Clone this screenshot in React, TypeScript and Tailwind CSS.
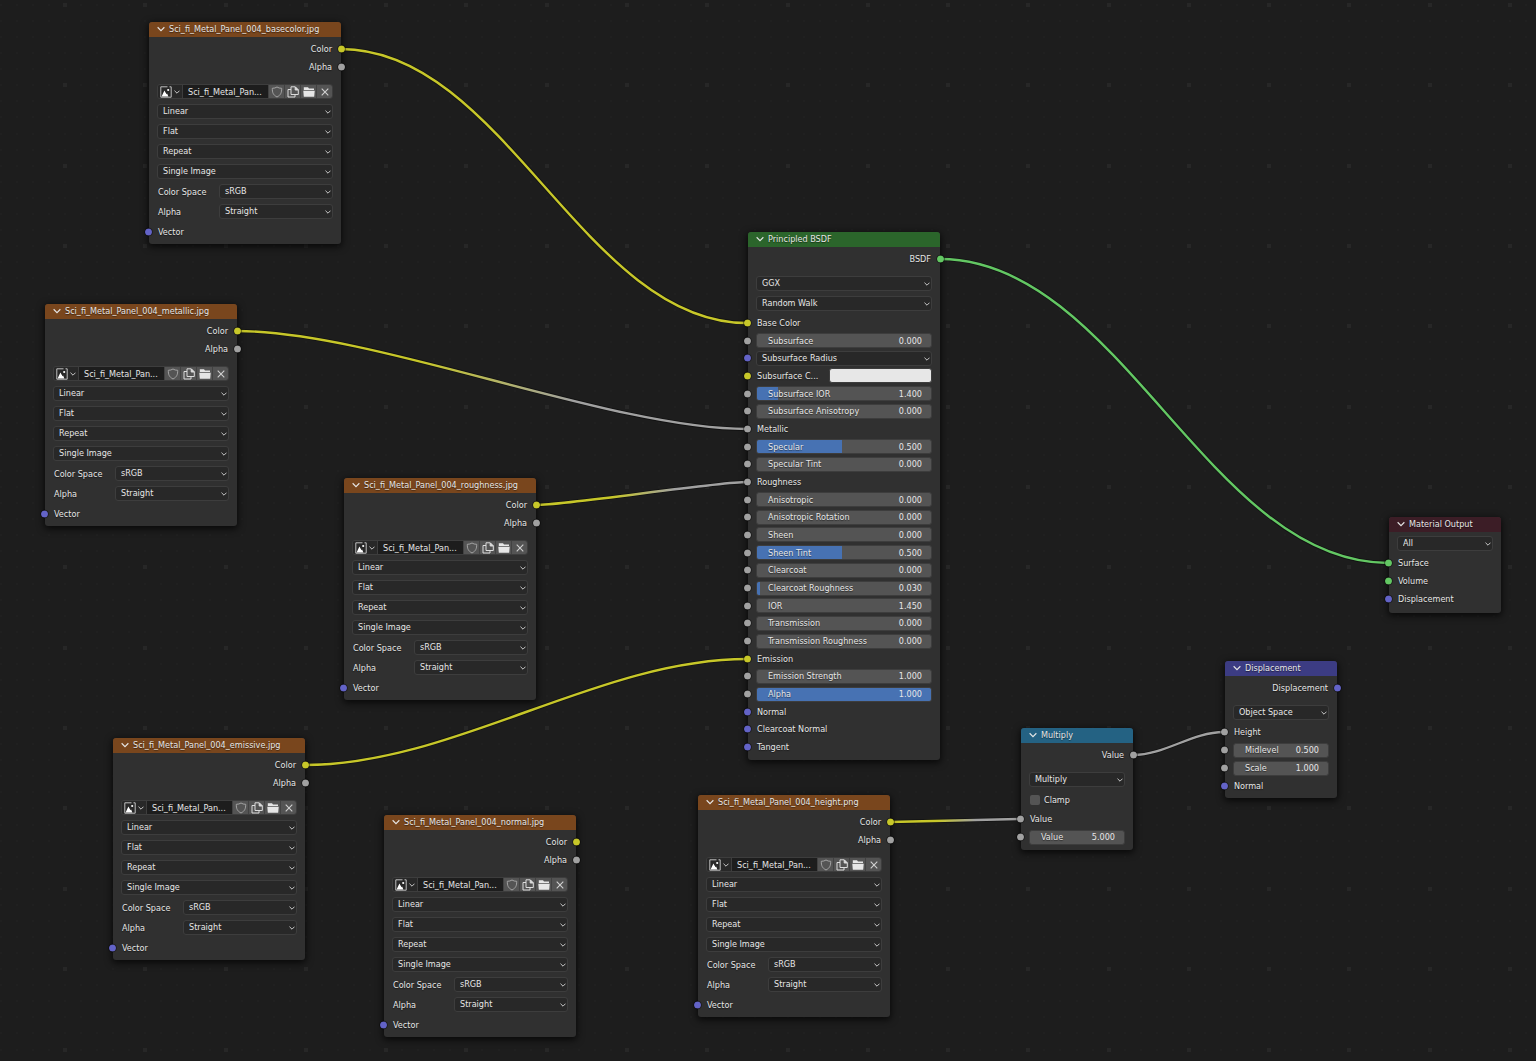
import { useId } from "react";

type Kind = "color" | "value" | "vector" | "shader";

const socketFill: Record<Kind, string> = {
  color: "bg-[#c7c729]",
  value: "bg-[#a1a1a1]",
  vector: "bg-[#6363c7]",
  shader: "bg-[#63c763]",
};

function Socket({ kind, side }: { kind: Kind; side: "left" | "right" }) {
  return (
    <span
      className={`absolute top-1/2 size-[7px] -translate-y-1/2 rounded-full outline outline-black/40 ${side === "left" ? "-left-1" : "-right-1"} ${socketFill[kind]}`}
    />
  );
}

function Chevron({ className }: { className: string }) {
  return (
    <svg viewBox="0 0 10 10" className={className} fill="none" stroke="currentColor" strokeWidth="1.4" aria-hidden="true">
      <path d="M0.800 2.800L5 7l4.200-4.200" />
    </svg>
  );
}

function Output({ label, kind }: { label: string; kind: Kind }) {
  return (
    <div className="relative flex h-[18px] items-center justify-end px-[9px]">
      {label}
      <Socket kind={kind} side="right" />
    </div>
  );
}

function Input({ label, kind }: { label: string; kind: Kind }) {
  return (
    <div className="relative flex h-full min-h-4 items-center px-[9px]">
      {label}
      <Socket kind={kind} side="left" />
    </div>
  );
}

function Select({ value, label }: { value: string; label: string }) {
  return (
    <div className="relative min-w-0 flex-1">
      <select
        aria-label={label}
        className="block h-[15px] w-full appearance-none rounded-[3px] border border-[#3d3d3d] bg-[#282828] pr-3 pl-[5px] leading-[13px] outline-none"
      >
        <option>{value}</option>
      </select>
      <Chevron className="pointer-events-none absolute top-[5px] right-[2px] size-[6px]" />
    </div>
  );
}

function Slider({ label, value, fill = 0, kind = "value" }: { label: string; value: string; fill?: number; kind?: Kind }) {
  const id = useId();
  return (
    <div className="relative flex h-full items-center px-2">
      <div className="relative flex h-[15px] w-full items-center justify-between overflow-hidden rounded-[3px] border border-[#3d3d3d] bg-[#545454] pr-[9px] pl-[11px]">
        <span className="absolute inset-y-0 left-0 bg-[#4772b3]" style={{ width: `${fill}%` }} />
        <label htmlFor={id} className="relative whitespace-nowrap">
          {label}
        </label>
        <input id={id} defaultValue={value} className="relative h-[13px] w-8 bg-transparent text-right outline-none" />
      </div>
      <Socket kind={kind} side="left" />
    </div>
  );
}

function Node({
  title,
  header,
  place,
  children,
}: {
  title: string;
  header: string;
  place: string;
  children: React.ReactNode;
}) {
  return (
    <section className={`absolute rounded-[3px] bg-[#303030] shadow-[0_2px_7px_1px_rgba(0,0,0,0.7)] ${place}`}>
      <header className={`flex h-[15px] items-center gap-1 rounded-t-[3px] pb-0.5 pl-2 ${header}`}>
        <button aria-label={`Collapse ${title}`} className="flex pt-px">
          <Chevron className="size-2" />
        </button>
        <h2 className="whitespace-nowrap">{title}</h2>
      </header>
      {children}
    </section>
  );
}

function ImageIcon() {
  return (
    <svg viewBox="0 0 12 12" className="size-3" aria-hidden="true">
      <path d="M7.500 .8H.8v10.400h10.400V.8H9.500" fill="none" stroke="#d0d0d0" strokeWidth="0.9" />
      <path d="M1.600 10.600L4.400 4.600l2.100 3.600.6-.8 1.300 3.200z" fill="#fff" />
      <circle cx="8.200" cy="4" r="1.100" fill="#fff" />
    </svg>
  );
}

function ShieldIcon() {
  return (
    <svg viewBox="0 0 12 12" className="size-3" fill="none" stroke="#a4a4a4" strokeWidth="1" aria-hidden="true">
      <path d="M6 1C4.800 1.900 3 2.300 1.300 2.300C1.300 6.500 2 8.900 6 11C10 8.900 10.700 6.500 10.700 2.300C9 2.300 7.200 1.900 6 1z" />
    </svg>
  );
}

function CopyIcon() {
  return (
    <svg viewBox="0 0 12 12" className="size-3" fill="none" stroke="#dcdcdc" strokeWidth="1" aria-hidden="true">
      <path d="M4 .8h4.300L11.300 3.800V8.500H4z" />
      <path d="M8.200 1v3h3z" fill="#dcdcdc" />
      <path d="M4 3.500H1V11h7V8.500" />
    </svg>
  );
}

function FolderIcon() {
  return (
    <svg viewBox="0 0 12 12" className="size-3" fill="#e6e6e6" aria-hidden="true">
      <path d="M.8 1.200h4.200l1 1.300h5v1.500H.8z" />
      <path d="M.3 4.700h11.400l-.5 6.100H.8z" />
    </svg>
  );
}

function CrossIcon() {
  return (
    <svg viewBox="0 0 12 12" className="size-3" fill="none" stroke="#d0d0d0" strokeWidth="1.1" aria-hidden="true">
      <path d="M2.700 2.700l6.600 6.600M9.300 2.700L2.700 9.300" />
    </svg>
  );
}

const toolButton = "flex w-4 items-center justify-center border-l border-[#424242] bg-[#545454]";

function ImageNode({ file, place }: { file: string; place: string }) {
  return (
    <Node title={`Sci_fi_Metal_Panel_004_${file}`} header="bg-[#79461d]" place={`w-48 ${place}`}>
      <div className="pt-[3px]">
        <Output label="Color" kind="color" />
        <Output label="Alpha" kind="value" />
      </div>
      <div className="flex flex-col gap-[5px] px-2 pt-2">
        <div className="flex h-[15px] overflow-hidden rounded-[3px] border border-[#3d3d3d]">
          <button aria-label="Browse image" className="flex w-6 items-center justify-center gap-0.5 bg-[#282828]">
            <ImageIcon />
            <Chevron className="size-[6px]" />
          </button>
          <input
            aria-label="Image name"
            defaultValue="Sci_fi_Metal_Pan..."
            className="min-w-0 flex-1 border-l border-[#3d3d3d] bg-[#1d1d1d] pl-[5px] outline-none"
          />
          <div className="flex">
            <button aria-label="Fake user" className={toolButton}>
              <ShieldIcon />
            </button>
            <button aria-label="New image" className={toolButton}>
              <CopyIcon />
            </button>
            <button aria-label="Open image" className={toolButton}>
              <FolderIcon />
            </button>
            <button aria-label="Unlink image" className={toolButton}>
              <CrossIcon />
            </button>
          </div>
        </div>
        <div className="flex"><Select label="Interpolation" value="Linear" /></div>
        <div className="flex"><Select label="Projection" value="Flat" /></div>
        <div className="flex"><Select label="Extension" value="Repeat" /></div>
        <div className="flex"><Select label="Source" value="Single Image" /></div>
        <div className="flex items-center">
          <span className="w-[62px] whitespace-nowrap pl-px">Color Space</span>
          <Select label="Color Space" value="sRGB" />
        </div>
        <div className="flex items-center">
          <span className="w-[62px] pl-px">Alpha</span>
          <Select label="Alpha" value="Straight" />
        </div>
      </div>
      <div className="pt-[5px] pb-1">
        <Input label="Vector" kind="vector" />
      </div>
    </Node>
  );
}

function PrincipledNode() {
  return (
    <Node title="Principled BSDF" header="bg-[#2b652b]" place="left-[748px] top-[232px] w-48">
      <div className="pt-[3px]">
        <Output label="BSDF" kind="shader" />
      </div>
      <div className="flex flex-col gap-[5px] px-2 pt-2">
        <div className="flex"><Select label="Distribution" value="GGX" /></div>
        <div className="flex"><Select label="Subsurface method" value="Random Walk" /></div>
      </div>
      <div className="mt-[3px] mb-1 grid h-[442px] auto-rows-fr">
        <Input label="Base Color" kind="color" />
        <Slider label="Subsurface" value="0.000" />
        <div className="relative flex items-center px-2">
          <Select label="Subsurface Radius" value="Subsurface Radius" />
          <Socket kind="vector" side="left" />
        </div>
        <div className="relative flex items-center justify-between pr-2 pl-[9px]">
          <span>Subsurface C...</span>
          <button aria-label="Subsurface Color" className="h-[15px] w-[103px] rounded-[3px] border border-[#3d3d3d] bg-[#e7e7e7]" />
          <Socket kind="color" side="left" />
        </div>
        <Slider label="Subsurface IOR" value="1.400" fill={12} />
        <Slider label="Subsurface Anisotropy" value="0.000" />
        <Input label="Metallic" kind="value" />
        <Slider label="Specular" value="0.500" fill={49} />
        <Slider label="Specular Tint" value="0.000" />
        <Input label="Roughness" kind="value" />
        <Slider label="Anisotropic" value="0.000" />
        <Slider label="Anisotropic Rotation" value="0.000" />
        <Slider label="Sheen" value="0.000" />
        <Slider label="Sheen Tint" value="0.500" fill={49} />
        <Slider label="Clearcoat" value="0.000" />
        <Slider label="Clearcoat Roughness" value="0.030" fill={2} />
        <Slider label="IOR" value="1.450" />
        <Slider label="Transmission" value="0.000" />
        <Slider label="Transmission Roughness" value="0.000" />
        <Input label="Emission" kind="color" />
        <Slider label="Emission Strength" value="1.000" />
        <Slider label="Alpha" value="1.000" fill={100} />
        <Input label="Normal" kind="vector" />
        <Input label="Clearcoat Normal" kind="vector" />
        <Input label="Tangent" kind="vector" />
      </div>
    </Node>
  );
}

function MaterialOutputNode() {
  return (
    <Node title="Material Output" header="bg-[#3c1d26]" place="left-[1389px] top-[517px] w-28">
      <div className="flex px-2 pt-1"><Select label="Target" value="All" /></div>
      <div className="mt-[3px] grid auto-rows-[18px] pb-[5px]">
        <Input label="Surface" kind="shader" />
        <Input label="Volume" kind="shader" />
        <Input label="Displacement" kind="vector" />
      </div>
    </Node>
  );
}

function DisplacementNode() {
  return (
    <Node title="Displacement" header="bg-[#3c3c83]" place="left-[1225px] top-[661px] w-28">
      <div className="pt-[3px]">
        <Output label="Displacement" kind="vector" />
      </div>
      <div className="flex px-2 pt-2"><Select label="Space" value="Object Space" /></div>
      <div className="mt-[3px] grid auto-rows-[18px] pb-[3px]">
        <Input label="Height" kind="value" />
        <Slider label="Midlevel" value="0.500" />
        <Slider label="Scale" value="1.000" />
        <Input label="Normal" kind="vector" />
      </div>
    </Node>
  );
}

function MultiplyNode() {
  return (
    <Node title="Multiply" header="bg-[#246283]" place="left-[1021px] top-[728px] w-28">
      <div className="pt-[3px]">
        <Output label="Value" kind="value" />
      </div>
      <div className="flex flex-col gap-[5px] px-2 pt-2">
        <div className="flex"><Select label="Operation" value="Multiply" /></div>
        <label className="flex h-[15px] items-center gap-1 pl-px">
          <input type="checkbox" className="size-[10px] appearance-none rounded-[2px] bg-[#545454]" />
          Clamp
        </label>
      </div>
      <div className="mt-[3px] grid auto-rows-[18px] pb-1">
        <Input label="Value" kind="value" />
        <Slider label="Value" value="5.000" />
      </div>
    </Node>
  );
}

const wires = [
  { from: [341, 49], to: [747, 323], a: "#c7c729", b: "#c7c729" },
  { from: [237, 331], to: [747, 429], a: "#c7c729", b: "#a1a1a1" },
  { from: [536, 505], to: [747, 482], a: "#c7c729", b: "#a1a1a1" },
  { from: [305, 765], to: [747, 659], a: "#c7c729", b: "#c7c729" },
  { from: [940, 259], to: [1388, 563], a: "#63c763", b: "#63c763" },
  { from: [890, 822], to: [1020, 819], a: "#c7c729", b: "#a1a1a1" },
  { from: [1133, 755], to: [1224, 732], a: "#a1a1a1", b: "#a1a1a1" },
];

function Wires() {
  return (
    <svg className="pointer-events-none absolute inset-0 h-full w-full" fill="none" aria-hidden="true">
      {wires.map(({ from: [x1, y1], to: [x2, y2], a, b }, i) => {
        // Shallow wires get shorter handles so that they stay nearly straight.
        const slope = Math.abs((y2 - y1) / (x2 - x1));
        const h = (x2 - x1) * 0.4 * Math.min(1, slope * 3.5);
        const d = `M${x1} ${y1}C${x1 + h} ${y1} ${x2 - h} ${y2} ${x2} ${y2}`;
        return (
          <g key={i}>
            <linearGradient id={`wire${i}`} gradientUnits="userSpaceOnUse" x1={x1} y1="0" x2={x2} y2="0">
              <stop offset="0.36" stopColor={a} />
              <stop offset="0.66" stopColor={b} />
            </linearGradient>
            <path d={d} stroke="#000" strokeOpacity="0.4" strokeWidth="4" />
            <path d={d} stroke={`url(#wire${i})`} strokeWidth="2.4" />
          </g>
        );
      })}
    </svg>
  );
}

function DotGrid() {
  const dots = [];
  for (let row = -5; row < 95; row++) {
    for (let col = -5; col < 95; col++) {
      const major = row % 5 === 0 && col % 5 === 0;
      const size = major ? 4 : 2;
      dots.push(
        <rect
          key={`${row}:${col}`}
          x={Math.round(65 + (col * 80.28) / 5 - size / 2)}
          y={Math.round(5 + (row * 80.35) / 5 - size / 2)}
          width={size}
          height={size}
          fill={major ? "#272727" : "#202020"}
        />,
      );
    }
  }
  return (
    <svg className="pointer-events-none absolute inset-0 h-full w-full" aria-hidden="true">
      {dots}
    </svg>
  );
}

export default function App() {
  return (
    <main className="relative h-screen w-full overflow-hidden bg-[#1d1d1d] font-['DejaVu_Sans_Condensed','DejaVu_Sans',sans-serif] text-[9px] leading-3 text-[#e6e6e6] [text-shadow:0_1px_1px_rgba(0,0,0,0.5)]">
      <DotGrid />
      <Wires />
      <ImageNode file="basecolor.jpg" place="left-[149px] top-[22px]" />
      <ImageNode file="metallic.jpg" place="left-[45px] top-[304px]" />
      <ImageNode file="roughness.jpg" place="left-[344px] top-[478px]" />
      <ImageNode file="emissive.jpg" place="left-[113px] top-[738px]" />
      <ImageNode file="normal.jpg" place="left-[384px] top-[815px]" />
      <ImageNode file="height.png" place="left-[698px] top-[795px]" />
      <PrincipledNode />
      <MultiplyNode />
      <DisplacementNode />
      <MaterialOutputNode />
    </main>
  );
}
